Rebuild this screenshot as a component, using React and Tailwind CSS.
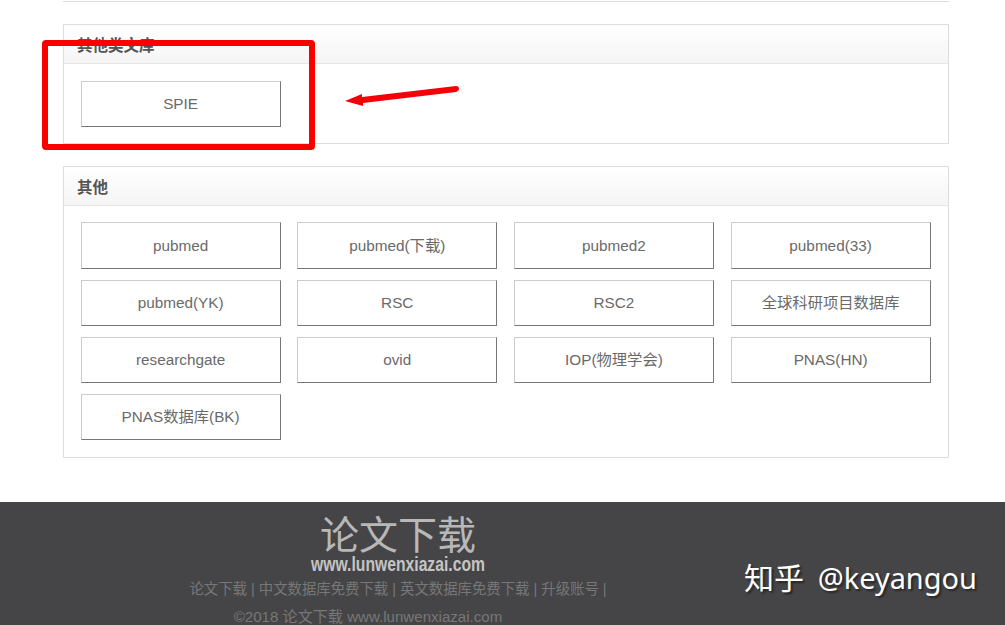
import React from 'react';

const cjk = '"Liberation Sans", "Noto Sans CJK SC", sans-serif';

const others = [
  'pubmed', 'pubmed(下载)', 'pubmed2', 'pubmed(33)',
  'pubmed(YK)', 'RSC', 'RSC2', '全球科研项目数据库',
  'researchgate', 'ovid', 'IOP(物理学会)', 'PNAS(HN)',
  'PNAS数据库(BK)',
];

const DbButton = ({ name }) => (
  <a className="flex items-center justify-center h-[46.1px] pt-px border border-[#cccccc] border-r-[#777777] border-b-[#777777] bg-white text-[15.3px] text-[#6a6a6a]">
    {name}
  </a>
);

const Panel = ({ title, items, className, bodyClass }) => (
  <div className={`border border-[#dddddd] ${className}`}>
    <div className="flex items-center h-[39px] pt-[3px] px-[13px] border-b border-[#e6e6e6] bg-gradient-to-b from-white to-[#f5f5f5] text-[15.5px] font-bold text-[#555555]">
      {title}
    </div>
    <div className={`grid grid-cols-4 gap-x-[16.7px] gap-y-[11.2px] pl-[16.6px] pr-[17.4px] ${bodyClass}`}>
      {items.map(name => <DbButton key={name} name={name} />)}
    </div>
  </div>
);

const App = () => (
  <div className="relative h-[625px] overflow-hidden bg-white" style={{ fontFamily: cjk }}>
    <div className="ml-[63px] w-[886px] h-[2px] border-b border-[#dddddd]" />

    <Panel title="其他类文库" items={['SPIE']} bodyClass="pt-[17px]" className="ml-[63px] w-[886px] mt-[22px] h-[120px]" />
    <Panel title="其他" items={others} bodyClass="pt-[16.45px]" className="ml-[63px] w-[886px] mt-[22px] h-[292px]" />

    <footer className="mt-[44px] h-[123px] overflow-hidden bg-[#454547] w-full">
      <div className="w-[796px] flex flex-col items-center">
        <div className="mt-[11px] h-[39px] text-[39px] leading-[39px] font-normal text-[#b8b8b8]" style={{ fontFamily: '"Noto Sans CJK SC", sans-serif' }}>
          论文下载
        </div>
        <div className="mt-[2px] h-[20px] text-[19.5px] leading-[20px] font-bold text-[#c4c4c4] whitespace-nowrap scale-x-[0.805]">
          www.lunwenxiazai.com
        </div>
        <div className="mt-[5px] h-[20px] text-[14.4px] leading-[20px] text-[#777777] whitespace-nowrap">
          论文下载 | 中文数据库免费下载 | 英文数据库免费下载 | 升级账号 |
        </div>
        <div className="mt-[9px] pr-[60px] h-[18px] text-[15.1px] leading-[18px] text-[#777777] whitespace-nowrap">
          ©2018 论文下载 www.lunwenxiazai.com
        </div>
      </div>
    </footer>

    {/* annotations on top of the screenshot */}
    <div className="absolute left-[42px] top-[40px] w-[273px] h-[110px] border-[6px] border-[#f80000] rounded-[4px]" />
    <svg className="absolute left-[340px] top-[78px]" width="125" height="32" viewBox="0 0 125 32">
      <path d="M5 23 L22 16 L22 19 L116 8 Q119 8 119 11 Q119 13 116 14 L23 25 L23 28 Z" fill="#f60008" />
    </svg>
    <div
      className="absolute left-[744px] top-[558px] text-[30px] leading-[40px] text-white whitespace-nowrap [text-shadow:2px_2px_2px_rgba(0,0,0,0.45)] [word-spacing:6px]"
      style={{ fontFamily: '"Noto Sans", "Noto Sans CJK SC", sans-serif' }}
    >
      知乎 <span className="text-[28.9px]">@keyangou</span>
    </div>
  </div>
);

export default App;
